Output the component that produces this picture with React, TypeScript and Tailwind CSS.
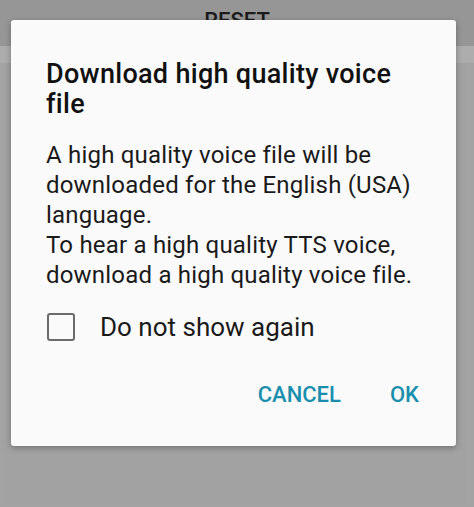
export default function App() {
  return (
    <div
      className="relative w-[474px] h-[507px] overflow-hidden bg-[#a3a3a3]"
      style={{ fontFamily: "Roboto, 'Noto Sans', sans-serif" }}
    >
      {/* settings screen behind the scrim */}
      <div className="flex h-[46px] items-start justify-center bg-[#969696] shadow-[0_2px_2px_rgba(0,0,0,0.12)]">
        <span className="mt-[6px] text-[22px] font-medium leading-[30px] text-[#1c1c1c]">RESET</span>
      </div>
      <div className="h-[17px] bg-[#adadad]" />
      <div className="ml-[3px] mr-[8px] h-[440px] bg-[#a2a2a2]" />

      {/* dialog */}
      <div className="absolute left-[11px] top-[20px] w-[445px] h-[426px] rounded-[3px] bg-[#fafafa] shadow-[0_2px_6px_rgba(0,0,0,0.3)] flex flex-col pt-[39px] pl-[35px] pr-[37px]">
        <h2 className="text-[27px] font-medium leading-[30px] tracking-[0.3px] text-[#111]">
          Download high quality voice file
        </h2>
        <p className="mt-[21px] text-[24px] leading-[30px] tracking-[0.2px] text-[#1a1a1a]">
          A high quality voice file will be downloaded for the English (USA) language.
          <br />
          To hear a high quality TTS voice, download a high quality voice file.
        </p>
        <label className="mt-[22px] flex items-center">
          <span className="ml-[1px] h-[28px] w-[28px] shrink-0 rounded-[3px] border-2 border-[#6b6b6b]" />
          <span className="ml-[25px] text-[26px] leading-[30px] text-[#1a1a1a]">Do not show again</span>
        </label>
        <div className="mt-[38px] flex justify-end gap-[49px]">
          <button className="text-[22px] font-medium leading-[30px] text-[#1a8fad]">CANCEL</button>
          <button className="text-[22px] font-medium leading-[30px] text-[#1a8fad]">OK</button>
        </div>
      </div>
    </div>
  );
}
